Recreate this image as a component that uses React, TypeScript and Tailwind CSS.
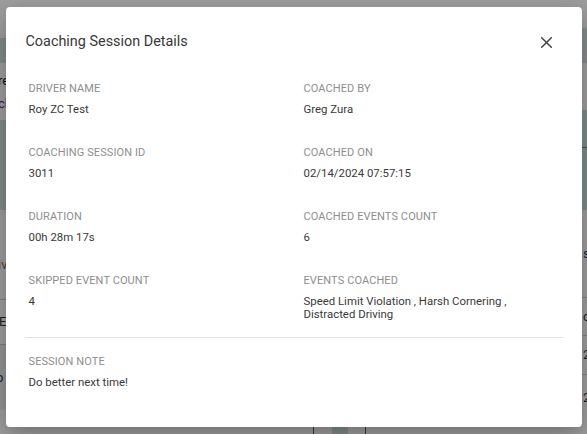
import React from "react";

const font = { fontFamily: "Roboto, 'Liberation Sans', sans-serif" };

function Field({ label, value }: { label: string; value: React.ReactNode }) {
  return (
    <div className="flex flex-col">
      <div className="text-[11px] leading-[13px] text-[#8e8e8e] uppercase tracking-[0.1px]">{label}</div>
      <div className="mt-[8px] text-[11.4px] leading-[13px] text-[#3a3a3a]">{value}</div>
    </div>
  );
}

export default function App() {
  return (
    <div className="relative w-[587px] h-[434px] overflow-hidden bg-white" style={font}>
      {/* underlying page */}
      <div className="flex h-full w-full">
        <div className="w-[313px] flex flex-col text-[13px]">
          <div className="h-[38px] bg-white" />
          <div className="h-[25px] bg-[#d0e4e1]" />
          <div className="h-[57px] bg-white flex flex-col justify-center gap-[6px] leading-[17px]">
            <span className="text-[#222] -ml-[2px]">re</span>
            <span className="text-[#5b2a8c] -ml-[2px]">cl</span>
          </div>
          <div className="h-[90px] bg-[#cfe3e0]" />
          <div className="h-[90px] bg-white flex items-center pt-[20px] border-b border-[#cfcfcf]">
            <span className="text-[#a8661a] -ml-[2px]">iv</span>
          </div>
          <div className="h-[45px] bg-white flex items-center border-b border-[#cfcfcf]">
            <span className="text-[#333] -ml-[1px]">E</span>
          </div>
          <div className="h-[65px] bg-[#f1f1f1] flex items-center">
            <span className="text-[#1d3b6e] -ml-[4px]">o</span>
          </div>
          <div className="flex-1 bg-white" />
        </div>
        <div className="flex-1 flex">
          <div className="flex-1 flex flex-col">
            <div className="flex-1 bg-white" />
            <div className="h-[20px] flex">
              <div className="w-[19px] bg-white border-l border-[#555]" />
              <div className="w-[16px] bg-[#cfe3e0]" />
              <div className="w-[18px] bg-white border-r border-[#555]" />
              <div className="flex-1 bg-white" />
            </div>
          </div>
          <div className="w-[5px] flex flex-col text-[13px] overflow-hidden">
            <div className="h-[28px] bg-white" />
            <div className="h-[35px] bg-[#d9e7e5]" />
            <div className="h-[47px] bg-white" />
            <div className="h-[38px] bg-[#cfe3e0] border-b border-[#7a8a88]" />
            <div className="h-[62px] bg-[#cfe3e0]" />
            <div className="h-[88px] bg-white flex items-center border-b border-[#cfcfcf]">
              <span className="text-[#1d3b6e] pl-[1px]">s</span>
            </div>
            <div className="h-[38px] bg-white flex items-center border-b border-[#cfcfcf]">
              <span className="text-[#333] pl-[1px]">c</span>
            </div>
            <div className="h-[39px] bg-white flex items-center border-b border-[#cfcfcf]">
              <span className="text-[#333] pl-[1px]">2</span>
            </div>
            <div className="h-[45px] bg-white flex items-center">
              <span className="text-[#333] pl-[1px]">2</span>
            </div>
            <div className="flex-1 bg-white" />
          </div>
        </div>
      </div>

      {/* backdrop + modal */}
      <div className="absolute inset-0 bg-black/[0.38] flex items-center justify-center">
        <div className="w-[576px] h-[420px] bg-white rounded-[4px] shadow-[0_8px_24px_rgba(0,0,0,0.3)] flex flex-col">
          <div className="h-[70px] flex items-center justify-between pl-[20px] pr-[30px]">
            <h2 className="text-[14.4px] text-[#383838] font-normal">Coaching Session Details</h2>
            <button className="w-[11px] h-[11px] flex items-center justify-center">
              <svg width="11" height="11" viewBox="0 0 11 11" fill="none">
                <path d="M0.7 0.7 L10.3 10.3 M10.3 0.7 L0.7 10.3" stroke="#444" strokeWidth="1.5" strokeLinecap="round" />
              </svg>
            </button>
          </div>
          <div className="px-[19px] pt-[5px] flex flex-col">
            <div className="grid grid-cols-[275px_1fr] gap-y-[30px] pl-[4px]">
              <Field label="Driver Name" value="Roy ZC Test" />
              <Field label="Coached By" value="Greg Zura" />
              <Field label="Coaching Session ID" value="3011" />
              <Field label="Coached On" value="02/14/2024 07:57:15" />
              <Field label="Duration" value="00h 28m 17s" />
              <Field label="Coached Events Count" value="6" />
              <Field label="Skipped Event Count" value="4" />
              <Field
                label="Events Coached"
                value={
                  <span className="block w-[230px]">Speed Limit Violation , Harsh Cornering , Distracted Driving</span>
                }
              />
            </div>
            <div className="mt-[16px] h-px bg-[#e2e2e2]" />
            <div className="pt-[17px] pl-[4px]">
              <Field label="Session Note" value="Do better next time!" />
            </div>
          </div>
        </div>
      </div>
    </div>
  );
}
